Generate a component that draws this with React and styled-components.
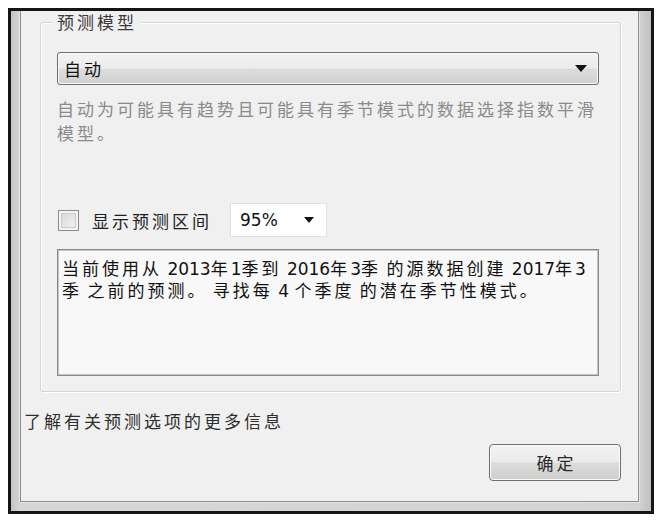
import React from "react";
import styled, { createGlobalStyle } from "styled-components";

const GlobalStyle = createGlobalStyle`
  html, body { margin: 0; padding: 0; background: #ffffff; }
  body { margin: 8px; font-family: "Noto Sans CJK SC", sans-serif; }
  * { box-sizing: border-box; }
`;

const HAN = /([\u2E80-\u9FFF\u3000-\u303F\uFF00-\uFFEF]+)/;

const Han = styled.span`
  letter-spacing: 3px;
`;

const Latin = styled.span`
  font-family: "DejaVu Sans", sans-serif;
  line-height: 1;
`;

function Cjk({ text }) {
  return text
    .split(HAN)
    .filter((part) => part.length > 0)
    .map((part, i) =>
      HAN.test(part) ? <Han key={i}>{part}</Han> : <Latin key={i}>{part}</Latin>
    );
}

const Window = styled.div`
  width: 646px;
  height: 506px;
  border: 3px solid #151515;
`;

const Frame = styled.div`
  height: 100%;
  display: flex;
  padding: 0 12px 9px 9px;
  background: linear-gradient(90deg, #c4c4c4 0%, #d6d6d6 1.5%, #d3d3d3 98%, #c0c0c0 100%);
`;

const Panel = styled.div`
  flex: 1;
  display: flex;
  flex-direction: column;
  background: #f0f0f0;
  border: 1px solid #8f8f8f;
  border-top: 0;
  box-shadow: 1px 1px 0 #e4e4e4, -1px 0 0 #e4e4e4;
  padding: 0 17px 0 3px;
  font-size: 17px;
`;

const Group = styled.fieldset`
  margin: 0 0 0 16px;
  padding: 19px 21px 15px 16px;
  border: 1px solid #d4d4d4;
  border-radius: 3px;
  box-shadow: inset 1px 1px 0 #ffffff, 1px 1px 0 #ffffff;
  min-width: 0;
`;

const Legend = styled.legend`
  margin-left: -5px;
  padding: 0 5px;
  line-height: 22px;
  background: #f0f0f0;
  color: #3a3a3a;
`;

const Select = styled.div`
  height: 33px;
  display: flex;
  align-items: center;
  justify-content: space-between;
  padding: 0 11px 0 6px;
  border: 1px solid #6f6f6f;
  border-radius: 3px;
  background: linear-gradient(#f3f3f3 0%, #ececec 48%, #dddddd 52%, #d0d0d0 100%);
  box-shadow: inset 0 0 0 1px #f8f8f8;
  color: #111;
`;

const Arrow = styled.span`
  width: 0;
  height: 0;
  border-left: ${(p) => p.$w}px solid transparent;
  border-right: ${(p) => p.$w}px solid transparent;
  border-top: ${(p) => p.$h}px solid #111;
`;

const Description = styled.div`
  margin-top: 12px;
  line-height: 24px;
  color: #8a8a8a;
`;

const OptionRow = styled.div`
  margin-top: 58px;
  height: 34px;
  display: flex;
  align-items: center;
`;

const CheckBox = styled.span`
  width: 21px;
  height: 21px;
  margin-left: 1px;
  border: 1px solid #8c8c8c;
  box-shadow: inset 0 0 0 2px #f4f4f4, inset 0 0 0 3px #c9cbcf;
  background-color: #f4f4f4;
  background-image: linear-gradient(135deg, #d2d4d8, #f7f7f7);
  background-clip: content-box;
  padding: 3px;
`;

const CheckLabel = styled.span`
  margin-left: 13px;
  color: #1e1e1e;
`;

const Combo = styled.div`
  margin-left: 18px;
  width: 97px;
  height: 34px;
  display: flex;
  align-items: center;
  justify-content: space-between;
  padding: 0 12px 0 9px;
  background: #ffffff;
  border: 1px solid #e2e2e2;
  font-family: "DejaVu Sans", sans-serif;
  color: #111;
`;

const Summary = styled.div`
  margin-top: 12px;
  height: 127px;
  padding: 7px 6px 0 4px;
  border: 1px solid #8a8a8a;
  box-shadow: inset 0 0 0 1px #c4c4c4;
  background: #f8f8f8;
  line-height: 22px;
  color: #111;
`;

const HelpText = styled.div`
  margin-top: 17px;
  line-height: 24px;
  color: #2e2e2e;
`;

const ButtonRow = styled.div`
  margin-top: 11px;
  display: flex;
  justify-content: flex-end;
`;

const Button = styled.div`
  width: 132px;
  height: 37px;
  display: flex;
  align-items: center;
  justify-content: center;
  border: 1px solid #6f6f6f;
  border-radius: 4px;
  background: linear-gradient(#f3f3f3 0%, #ebebeb 48%, #dcdcdc 52%, #cfcfcf 100%);
  box-shadow: inset 0 0 0 1px #fbfbfb;
  color: #2a2a2a;
  padding-left: 3px;
`;

export default function App() {
  return (
    <>
      <GlobalStyle />
      <Window>
        <Frame>
          <Panel>
            <Group>
              <Legend>
                <Cjk text="预测模型" />
              </Legend>
              <Select>
                <span>
                  <Cjk text="自动" />
                </span>
                <Arrow $w={6} $h={7} />
              </Select>
              <Description>
                <Cjk text="自动为可能具有趋势且可能具有季节模式的数据选择指数平滑模型。" />
              </Description>
              <OptionRow>
                <CheckBox />
                <CheckLabel>
                  <Cjk text="显示预测区间" />
                </CheckLabel>
                <Combo>
                  <span>95%</span>
                  <Arrow $w={5} $h={6} />
                </Combo>
              </OptionRow>
              <Summary>
                <Cjk text="当前使用从 2013年1季到 2016年3季 的源数据创建 2017年3季 之前的预测。 寻找每 4 个季度 的潜在季节性模式。" />
              </Summary>
            </Group>
            <HelpText>
              <Cjk text="了解有关预测选项的更多信息" />
            </HelpText>
            <ButtonRow>
              <Button>
                <Cjk text="确定" />
              </Button>
            </ButtonRow>
          </Panel>
        </Frame>
      </Window>
    </>
  );
}
